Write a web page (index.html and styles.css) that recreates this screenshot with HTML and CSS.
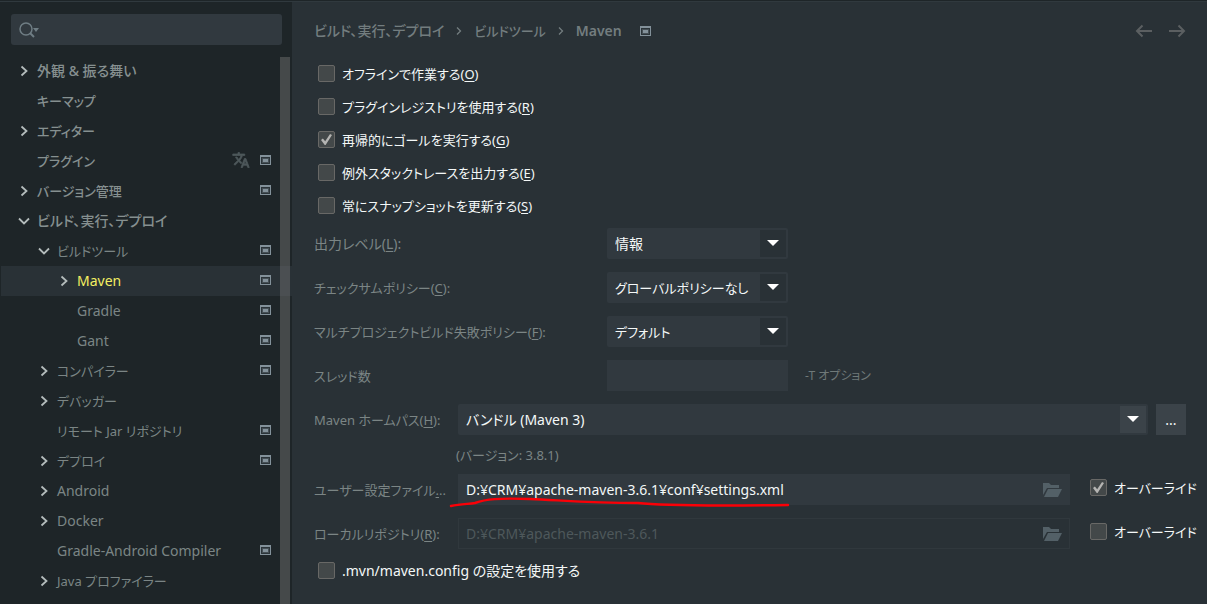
FILE: index.html
```html
<!DOCTYPE html>
<html lang="ja">
<head>
  <meta charset="UTF-8">
  <title>設定 - Maven</title>
  <meta name="viewport" content="width=device-width, initial-scale=1.0">
  <link rel="stylesheet" href="styles.css">
</head>
<body>
  <!-- shared icons -->
  <svg class="sprite" aria-hidden="true">
    <symbol id="i-right" viewBox="0 0 12 12"><path d="M3.5 1.5 8.5 6 3.5 10.500" fill="none" stroke="currentColor" stroke-width="1.8"/></symbol>
    <symbol id="i-down" viewBox="0 0 12 12"><path d="M1 3.500 6 8.500 11 3.500" fill="none" stroke="currentColor" stroke-width="1.8"/></symbol>
    <symbol id="i-sep" viewBox="0 0 6 10"><path d="M1 1.500 4.500 5 1 8.500" fill="none" stroke="currentColor" stroke-width="1.300"/></symbol>
    <symbol id="i-project" viewBox="0 0 11 10"><path fill="currentColor" d="M0 0h11v10H0z"/><path fill="#2b3439" d="M1 2h9v7H1z"/><path fill="#465056" d="M2 3h7v5H2z"/><path fill="currentColor" d="M3 4h5v3H3z"/></symbol>
    <symbol id="i-translate" viewBox="0 0 24 24"><path fill="currentColor" stroke="currentColor" d="M12.870 15.070l-2.540-2.510.03-.03A17.520 17.520 0 0 0 14.070 6H17V4h-7V2H8v2H1v2h11.170C11.500 7.920 10.440 9.750 9 11.350 8.070 10.320 7.300 9.190 6.690 8h-2c.73 1.630 1.730 3.170 2.980 4.560l-5.090 5.020L4 19l5-5 3.110 3.110.76-2.040zM18.500 10h-2L12 22h2l1.120-3h4.750L21 22h2l-4.500-12zm-2.620 7l1.620-4.330L19.120 17h-3.240z"/></symbol>
    <symbol id="i-folder" viewBox="0 0 20 16"><path fill="currentColor" d="M1 1h6l2 2h8v3H5L1 13z"/><path fill="currentColor" d="M6 7h14l-4 8H2z"/></symbol>
    <symbol id="i-back" viewBox="0 0 18 14"><path d="M17 7H2M7.500 1.500 2 7l5.500 5.500" fill="none" stroke="currentColor" stroke-width="2"/></symbol>
    <symbol id="i-forward" viewBox="0 0 18 14"><path d="M1 7h15M10.500 1.500 16 7l-5.500 5.500" fill="none" stroke="currentColor" stroke-width="2"/></symbol>
  </svg>

  <div class="settings">
    <aside class="sidebar">
      <div class="search">
        <svg class="search-icon" viewBox="0 0 21 16" aria-hidden="true">
          <circle cx="7" cy="7" r="6" fill="none" stroke="currentColor" stroke-width="1.500"/>
          <path d="M11 11l4 4" stroke="currentColor" stroke-width="2"/>
          <path d="M14 6h6l-3 4z" fill="currentColor"/>
        </svg>
        <input class="search-input" type="text" aria-label="検索">
      </div>
      <div class="tree-wrap">
        <ul class="tree">
          <li class="node top"><button class="toggle" aria-label="展開"><svg><use href="#i-right"/></svg></button><span class="name">外観 &amp; 振る舞い</span></li>
          <li class="node top"><span class="toggle"></span><span class="name kana">キーマップ</span></li>
          <li class="node top"><button class="toggle" aria-label="展開"><svg><use href="#i-right"/></svg></button><span class="name kana">エディター</span></li>
          <li class="node top"><span class="toggle"></span><span class="name kana">プラグイン</span><svg class="translate"><use href="#i-translate"/></svg><svg class="project"><use href="#i-project"/></svg></li>
          <li class="node top"><button class="toggle" aria-label="展開"><svg><use href="#i-right"/></svg></button><span class="name kana">バージョン管理</span><svg class="project"><use href="#i-project"/></svg></li>
          <li class="node top"><button class="toggle" aria-label="折りたたむ"><svg><use href="#i-down"/></svg></button><span class="name">ビルド、実行、デプロイ</span></li>
          <li class="node level-1"><button class="toggle" aria-label="折りたたむ"><svg><use href="#i-down"/></svg></button><span class="name kana">ビルドツール</span><svg class="project"><use href="#i-project"/></svg></li>
          <li class="node level-2 selected"><button class="toggle" aria-label="展開"><svg><use href="#i-right"/></svg></button><span class="name">Maven</span><svg class="project"><use href="#i-project"/></svg></li>
          <li class="node level-2"><span class="toggle"></span><span class="name">Gradle</span><svg class="project"><use href="#i-project"/></svg></li>
          <li class="node level-2"><span class="toggle"></span><span class="name">Gant</span><svg class="project"><use href="#i-project"/></svg></li>
          <li class="node level-1"><button class="toggle" aria-label="展開"><svg><use href="#i-right"/></svg></button><span class="name kana">コンパイラー</span><svg class="project"><use href="#i-project"/></svg></li>
          <li class="node level-1"><button class="toggle" aria-label="展開"><svg><use href="#i-right"/></svg></button><span class="name kana">デバッガー</span></li>
          <li class="node level-1"><span class="toggle"></span><span class="name kana">リモート Jar リポジトリ</span><svg class="project"><use href="#i-project"/></svg></li>
          <li class="node level-1"><button class="toggle" aria-label="展開"><svg><use href="#i-right"/></svg></button><span class="name kana">デプロイ</span><svg class="project"><use href="#i-project"/></svg></li>
          <li class="node level-1"><button class="toggle" aria-label="展開"><svg><use href="#i-right"/></svg></button><span class="name">Android</span></li>
          <li class="node level-1"><button class="toggle" aria-label="展開"><svg><use href="#i-right"/></svg></button><span class="name">Docker</span></li>
          <li class="node level-1"><span class="toggle"></span><span class="name">Gradle-Android Compiler</span><svg class="project"><use href="#i-project"/></svg></li>
          <li class="node level-1"><button class="toggle" aria-label="展開"><svg><use href="#i-right"/></svg></button><span class="name kana">Java プロファイラー</span></li>
        </ul>
        <div class="scrollbar"></div>
      </div>
    </aside>

    <main class="content">
      <header class="header">
        <nav class="crumbs">
          <span>ビルド、実行、デプロイ</span>
          <svg class="sep"><use href="#i-sep"/></svg>
          <span class="kana">ビルドツール</span>
          <svg class="sep"><use href="#i-sep"/></svg>
          <span class="current">Maven</span>
        </nav>
        <svg class="project"><use href="#i-project"/></svg>
        <div class="history">
          <button aria-label="戻る"><svg><use href="#i-back"/></svg></button>
          <button aria-label="進む"><svg><use href="#i-forward"/></svg></button>
        </div>
      </header>

      <div class="checks">
        <label class="check kana"><input type="checkbox"><span>オフラインで作業する(<u>O</u>)</span></label>
        <label class="check kana"><input type="checkbox"><span>プラグインレジストリを使用する(<u>R</u>)</span></label>
        <label class="check"><input type="checkbox" checked><span>再帰的にゴールを実行する(<u>G</u>)</span></label>
        <label class="check"><input type="checkbox"><span>例外スタックトレースを出力する(<u>E</u>)</span></label>
        <label class="check"><input type="checkbox"><span>常にスナップショットを更新する(<u>S</u>)</span></label>
      </div>

      <div class="options">
        <div class="row">
          <label for="level">出力レベル(<u>L</u>):</label>
          <div class="combo"><select id="level"><option>情報</option></select></div>
        </div>
        <div class="row">
          <label class="kana" for="checksum">チェックサムポリシー(<u>C</u>):</label>
          <div class="combo"><select class="kana" id="checksum"><option>グローバルポリシーなし</option></select></div>
        </div>
        <div class="row">
          <label class="kana" for="fail">マルチプロジェクトビルド失敗ポリシー(<u>F</u>):</label>
          <div class="combo"><select class="kana" id="fail"><option>デフォルト</option></select></div>
        </div>
        <div class="row">
          <label class="kana" for="threads">スレッド数</label>
          <input class="field threads" id="threads" type="text">
          <span class="hint">-T オプション</span>
        </div>
      </div>

      <div class="paths">
        <div class="row home">
          <label class="kana" for="home">Maven ホームパス(<u>H</u>):</label>
          <div class="combo wide"><select id="home"><option>バンドル (Maven 3)</option></select></div>
          <button class="browse" aria-label="参照">...</button>
        </div>
        <div class="version kana">(バージョン: 3.8.1)</div>
        <div class="row">
          <label class="kana" for="user-file">ユーザー設定ファイル<u>.</u>..</label>
          <div class="file">
            <input class="field" id="user-file" type="text" value="D:¥CRM¥apache-maven-3.6.1¥conf¥settings.xml">
            <svg class="folder"><use href="#i-folder"/></svg>
            <svg class="marker" viewBox="0 0 342 10"><path d="M3 8C12 6 20 6 27 5C38 1 50 0 82 1C110 2 140 5 190 5C215 8 260 8 340 7" fill="none" stroke="#fb0007" stroke-width="2.400" stroke-linecap="round"/></svg>
          </div>
          <label class="check override kana"><input type="checkbox" checked><span>オーバーライド</span></label>
        </div>
        <div class="row">
          <label class="kana" for="repo">ローカルリポジトリ(<u>R</u>):</label>
          <div class="file">
            <input class="field" id="repo" type="text" value="D:¥CRM¥apache-maven-3.6.1" disabled>
            <svg class="folder"><use href="#i-folder"/></svg>
          </div>
          <label class="check override kana"><input type="checkbox"><span>オーバーライド</span></label>
        </div>
      </div>

      <label class="check config"><input type="checkbox"><span>.mvn/maven.config の設定を使用する</span></label>
    </main>
  </div>
</body>
</html>
```
FILE: styles.css
```css
* {
  box-sizing: border-box;
}
body {
  margin: 0;
  background: #293136;
  color: #f4f8f8;
  font-family: "Noto Sans", "Noto Sans CJK JP", sans-serif;
  font-size: 14px;
  line-height: 20px;
  font-feature-settings: "palt";
}
input,
select,
button {
  margin: 0;
  padding: 0;
  border: 0;
  border-radius: 0;
  background: none;
  color: inherit;
  font: inherit;
  font-feature-settings: inherit;
}
u {
  text-underline-offset: 2px;
}
/* labels that are mostly katakana */
.kana {
  font-size: 13px;
}
.sprite {
  display: none;
}
.settings {
  display: flex;
  height: 100vh;
  overflow: hidden;
  border-top: 1px solid #1e2528;
}

/* sidebar */
.sidebar {
  display: flex;
  flex-direction: column;
  flex: none;
  width: 292px;
  border-top: 1px solid #30393e;
  background: #1e2528;
}
.search {
  display: flex;
  align-items: center;
  gap: 8px;
  flex: none;
  height: 31px;
  margin: 12px 10px 12px 11px;
  padding: 0 8px;
  border-radius: 3px;
  background: #31393f;
}
.search-icon {
  width: 21px;
  height: 16px;
  color: #6f7d84;
}
.search-input {
  flex: 1;
  min-width: 0;
  outline: none;
}
.tree-wrap {
  position: relative;
  flex: 1;
  min-height: 0;
  overflow: hidden;
}
.tree {
  margin: -1px 0 0;
  padding: 0 0 0 1px;
  list-style: none;
}
.node {
  display: flex;
  align-items: center;
  height: 30px;
  padding: 0 21px 0 16px;
  color: #7b8585;
}
.top {
  color: #869090;
  font-weight: 500;
}
.level-1 {
  padding-left: 36px;
}
.level-2 {
  padding-left: 56px;
}
.selected {
  background: #293136;
}
.selected .name {
  color: #f3ee62;
}
.toggle {
  flex: none;
  width: 20px;
  height: 12px;
  color: #b4bcbc;
  text-align: left;
}
.toggle svg {
  display: block;
  width: 14px;
  height: 12px;
}
.name {
  flex: 1;
  white-space: nowrap;
}
.project {
  flex: none;
  width: 11px;
  height: 10px;
  color: #83919a;
}
.node .project {
  margin-bottom: 2px;
}
.translate {
  width: 18px;
  height: 18px;
  margin: 0 10px 2px 0;
  color: #4e585b;
}
.scrollbar {
  position: absolute;
  top: 0;
  right: 2px;
  bottom: 0;
  width: 10px;
  background: rgba(120, 120, 120, 0.43);
}

/* content */
.content {
  flex: 1;
  min-width: 0;
  padding: 0 17px 0 22px;
  border-top: 1px solid #30393e;
}
.header {
  display: flex;
  align-items: center;
  gap: 18px;
  height: 55px;
  padding: 2px 4px 0 0;
  color: #737d7f;
}
.crumbs {
  display: flex;
  align-items: center;
  gap: 12px;
  font-weight: 500;
}
.crumbs .current {
  font-weight: 600;
}
.sep {
  width: 6px;
  height: 10px;
}
.history {
  display: flex;
  gap: 15px;
  margin-left: auto;
  color: #5b5f61;
}
.history svg {
  display: block;
  width: 18px;
  height: 14px;
}
.checks {
  display: flex;
  flex-direction: column;
  align-items: flex-start;
}
.check {
  display: flex;
  align-items: center;
  gap: 7px;
  height: 33px;
  padding-left: 4px;
  white-space: nowrap;
}
.checks .check {
  font-size: 13px;
}
.check input {
  position: relative;
  flex: none;
  width: 17px;
  height: 17px;
  appearance: none;
  border: 1px solid #686866;
  border-radius: 2px;
  background: #434849;
}
.check input:checked::after {
  content: "";
  position: absolute;
  inset: 2px;
  background: #b4b4b2;
  clip-path: polygon(0 55%, 17% 40%, 38% 65%, 82% 0, 100% 10%, 42% 100%, 34% 100%);
}
.options,
.paths {
  display: flex;
  flex-direction: column;
  gap: 13px;
}
.options {
  padding-top: 6px;
}
.row {
  display: flex;
  align-items: center;
  height: 31px;
}
.row > label:first-child {
  flex: none;
  width: 293px;
  color: #7b8585;
  white-space: nowrap;
}
.paths {
  padding-top: 13px;
}
.paths .row > label:first-child {
  width: 144px;
}
.combo {
  position: relative;
  width: 181px;
  height: 31px;
}
.combo select {
  width: 100%;
  height: 100%;
  padding: 0 36px 0 8px;
  appearance: none;
  border-radius: 2px;
  background: #31393f;
}
.combo::before {
  content: "";
  position: absolute;
  top: 2px;
  right: 2px;
  bottom: 2px;
  width: 26px;
  background: #293136;
  pointer-events: none;
}
.combo::after {
  content: "";
  position: absolute;
  top: 12px;
  right: 9px;
  border: 6px solid transparent;
  border-top-color: #fff;
  border-bottom: 0;
  pointer-events: none;
}
.wide {
  flex: 1;
}
.wide::before {
  background: #3b4349;
}
.field {
  width: 100%;
  height: 31px;
  padding: 0 8px;
  background: #31393f;
}
.field:disabled {
  border: 1px solid #30383d;
  padding: 0 7px;
  background: none;
  color: #4e585b;
}
.threads {
  width: 181px;
}
.hint {
  margin-left: 17px;
  color: #6f7979;
  font-size: 12px;
}
.home {
  padding-right: 4px;
}
.browse {
  width: 30px;
  height: 31px;
  margin-left: 8px;
  background: #3b4349;
}
.version {
  margin: -3px 0 -4px 142px;
  color: #7b8585;
}
.file {
  position: relative;
  flex: 1;
}
.file .field {
  display: block;
}
.folder {
  position: absolute;
  top: 8px;
  right: 8px;
  width: 20px;
  height: 16px;
  color: #536067;
}
.marker {
  position: absolute;
  top: 24px;
  left: -10px;
  width: 342px;
  height: 10px;
  overflow: visible;
}
.override {
  height: 27px;
  margin: 0 0 4px 20px;
  padding-left: 0;
  width: 100px;
}
.config {
  width: max-content;
  margin-top: 5px;
}
```
